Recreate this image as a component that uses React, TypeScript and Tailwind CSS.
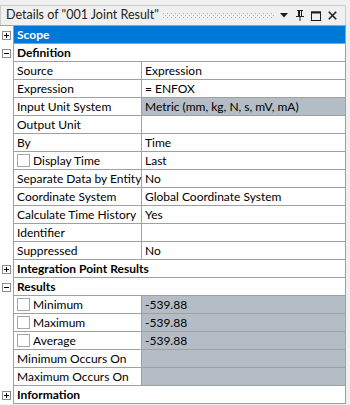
import React from "react";

type Row = {
  label: string;
  value?: string;
  header?: boolean;
  expander?: "+" | "-";
  selected?: boolean;
  check?: boolean;
  gray?: boolean;
};

const rows: Row[] = [
  { label: "Scope", header: true, expander: "+", selected: true },
  { label: "Definition", header: true, expander: "-" },
  { label: "Source", value: "Expression" },
  { label: "Expression", value: "= ENFOX" },
  { label: "Input Unit System", value: "Metric (mm, kg, N, s, mV, mA)", gray: true },
  { label: "Output Unit", value: "" },
  { label: "By", value: "Time" },
  { label: "Display Time", value: "Last", check: true },
  { label: "Separate Data by Entity", value: "No" },
  { label: "Coordinate System", value: "Global Coordinate System" },
  { label: "Calculate Time History", value: "Yes" },
  { label: "Identifier", value: "" },
  { label: "Suppressed", value: "No" },
  { label: "Integration Point Results", header: true, expander: "+" },
  { label: "Results", header: true, expander: "-" },
  { label: "Minimum", value: "-539.88", check: true, gray: true },
  { label: "Maximum", value: "-539.88", check: true, gray: true },
  { label: "Average", value: "-539.88", check: true, gray: true },
  { label: "Minimum Occurs On", value: "", gray: true },
  { label: "Maximum Occurs On", value: "", gray: true },
  { label: "Information", header: true, expander: "+" },
];

const Expander = ({ sign }: { sign: "+" | "-" }) => (
  <svg width="9" height="9" viewBox="0 0 9 9" className="block">
    <rect x="0.5" y="0.5" width="8" height="8" fill="white" stroke="#8c8c8c" />
    <path d="M2 4.5h5" stroke="#000" strokeWidth="1" />
    {sign === "+" && <path d="M4.5 2v5" stroke="#000" strokeWidth="1" />}
  </svg>
);

const TitleIcons = () => (
  <div className="flex items-center">
    <svg width="8" height="5" viewBox="0 0 8 5" className="ml-[5px]">
      <path d="M0 0h8L4 4.5z" fill="#1e1e1e" />
    </svg>
    <svg width="8" height="11" viewBox="0 0 8 11" className="ml-[8px]">
      <path d="M1 0.5h6M2.5 0.5v6M5.5 0.5v6M0 6.5h8M4 6.5v4.5" stroke="#1e1e1e" strokeWidth="1" fill="none" />
      <rect x="2" y="0.5" width="2" height="6" fill="#1e1e1e" />
    </svg>
    <svg width="10" height="10" viewBox="0 0 10 10" className="ml-[7px]">
      <rect x="0.5" y="1" width="9" height="8.5" fill="none" stroke="#1e1e1e" strokeWidth="1" />
      <path d="M0 1.5h10" stroke="#1e1e1e" strokeWidth="2" />
    </svg>
    <svg width="9" height="9" viewBox="0 0 9 9" className="ml-[7px]">
      <path d="M0.8 0.8l7.4 7.4M8.2 0.8l-7.4 7.4" stroke="#1e1e1e" strokeWidth="1.6" />
    </svg>
  </div>
);

const Grip = () => (
  <svg className="flex-1 h-[5px] ml-[4px]" height="5">
    <defs>
      <pattern id="grip" width="4" height="4" patternUnits="userSpaceOnUse">
        <rect x="0" y="0" width="1" height="1" fill="#b0b0b0" />
        <rect x="2" y="2" width="1" height="1" fill="#b0b0b0" />
      </pattern>
    </defs>
    <rect x="0" y="0" width="100%" height="5" fill="url(#grip)" />
  </svg>
);

const CheckBox = () => (
  <span className="w-[13px] h-[13px] border border-[#a6a6a6] bg-white mr-[3px] shrink-0" />
);

const PropRow = ({ row }: { row: Row }) => (
  <div className="flex h-[18px]">
    <div className="w-[13px] flex items-center justify-center">
      {row.expander && <Expander sign={row.expander} />}
    </div>
    {row.header ? (
      <div
        className={
          row.selected
            ? "flex-1 flex items-center pl-[3px] border-l border-b border-[#a0a0a0] bg-[#0078d7] text-white font-bold"
            : "flex-1 flex items-center pl-[3px] border-l border-b border-[#a0a0a0] font-bold"
        }
      >
        {row.label}
      </div>
    ) : (
      <div className="flex-1 flex border-l border-b border-[#a0a0a0]">
        <div className="w-[128px] flex items-center pl-[3px] border-r border-[#a0a0a0] whitespace-nowrap overflow-hidden">
          {row.check && <CheckBox />}
          {row.label}
        </div>
        <div
          className={
            row.gray
              ? "flex-1 flex items-center pl-[3px] bg-[#b4bdc5] whitespace-nowrap"
              : "flex-1 flex items-center pl-[3px] whitespace-nowrap"
          }
        >
          {row.value}
        </div>
      </div>
    )}
  </div>
);

export default function App() {
  return (
    <div className="w-[350px] h-[405px] bg-[#f0f0f0] pt-[5px] font-['Lato',sans-serif] text-[12px] leading-none text-black overflow-hidden">
      <div className="w-[346px]">
        <div className="h-[20px] flex items-center border-t border-x border-[#cccccc] pl-[5px] pr-[8px] text-[12.5px] text-[#1e1e1e]">
          <span className="whitespace-nowrap">Details of "001 Joint Result"</span>
          <Grip />
          <TitleIcons />
        </div>
        <div className="bg-white border-t border-r border-[#a0a0a0]">
          {rows.map((r) => (
            <PropRow key={r.label} row={r} />
          ))}
        </div>
      </div>
    </div>
  );
}
